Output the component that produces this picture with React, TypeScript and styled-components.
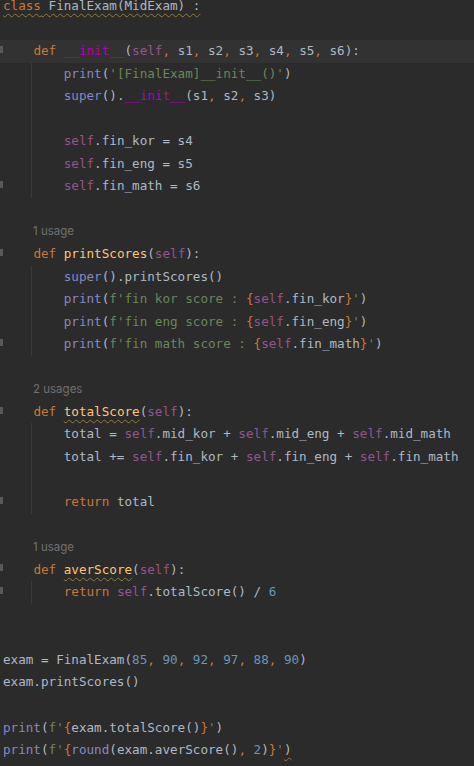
import React from "react";
import styled, { createGlobalStyle, css } from "styled-components";

const Global = createGlobalStyle`
  html, body { margin: 0; padding: 0; background: #2b2b2b; }
  body { width: 474px; height: 766px; overflow: hidden; }
`;

type Kind = "t" | "k" | "s" | "str" | "n" | "b" | "fn" | "m";
type Tok = [Kind, string, boolean?];

interface LineDef {
  toks?: Tok[];
  hint?: string;
  mark?: boolean;
  guide?: boolean;
  current?: boolean;
  underline?: boolean;
}

const colors: Record<Kind, string> = {
  t: "#aeb9c6",
  k: "#cc7832",
  s: "#94558d",
  str: "#6a8759",
  n: "#6897bb",
  b: "#8888c6",
  fn: "#ffc66d",
  m: "#b200b2",
};

const Editor = styled.div`
  width: 474px;
  height: 766px;
  overflow: hidden;
  background: #2b2b2b;
`;

const Lines = styled.div`
  display: flex;
  flex-direction: column;
  margin-top: -5px;
`;

const Row = styled.div<{ $current?: boolean; $guide?: boolean }>`
  display: flex;
  align-items: center;
  height: 22.55px;
  background-color: ${(p) => (p.$current ? "#323232" : "transparent")};
  ${(p) =>
    p.$guide &&
    css`
      background-image: linear-gradient(#3a3a3a, #3a3a3a);
      background-size: 1px 100%;
      background-position: 31px 0;
      background-repeat: no-repeat;
    `}
`;

const Gutter = styled.div`
  width: 3px;
  height: 100%;
  display: flex;
  align-items: center;
  flex-shrink: 0;
`;

const FoldMark = styled.span`
  display: block;
  width: 3px;
  height: 7px;
  background: #595959;
  margin-top: -4px;
`;

const Code = styled.pre<{ $underline?: boolean }>`
  margin: 0;
  font-family: "DejaVu Sans Mono", "Liberation Mono", monospace;
  font-size: 12.62px;
  line-height: 22.55px;
  white-space: pre;
  color: #aeb9c6;
  ${(p) =>
    p.$underline &&
    css`
      text-decoration: underline wavy #8f7d3f;
      text-decoration-thickness: 1px;
      text-underline-offset: 3px;
    `}
`;

const Tk = styled.span<{ $kind: Kind; $wavy?: boolean }>`
  color: ${(p) => colors[p.$kind]};
  ${(p) =>
    p.$wavy &&
    css`
      text-decoration: underline wavy #8f7d3f;
      text-decoration-thickness: 1px;
      text-underline-offset: 3px;
    `}
`;

const Hint = styled.span`
  padding-left: 30px;
  font-family: "Inter", "Noto Sans", sans-serif;
  font-size: 11.5px;
  color: #717171;
  line-height: 22.55px;
`;

const I1 = "    ";
const I2 = "        ";
const c: Tok = ["k", ","];

const lines: LineDef[] = [
  { toks: [["k", "class"], ["t", " FinalExam(MidExam) :"]], underline: true },
  {},
  {
    current: true,
    mark: true,
    toks: [
      ["t", I1], ["k", "def"], ["t", " "], ["m", "__init__"], ["t", "("], ["s", "self"], c,
      ["t", " s1"], c, ["t", " s2"], c, ["t", " s3"], c, ["t", " s4"], c, ["t", " s5"], c, ["t", " s6):"],
    ],
  },
  { guide: true, toks: [["t", I2], ["b", "print"], ["t", "("], ["str", "'[FinalExam]__init__()'"], ["t", ")"]] },
  {
    guide: true,
    toks: [["t", I2], ["b", "super"], ["t", "()."], ["m", "__init__"], ["t", "(s1"], c, ["t", " s2"], c, ["t", " s3)"]],
  },
  { guide: true },
  { guide: true, toks: [["t", I2], ["s", "self"], ["t", ".fin_kor = s4"]] },
  { guide: true, toks: [["t", I2], ["s", "self"], ["t", ".fin_eng = s5"]] },
  { guide: true, mark: true, toks: [["t", I2], ["s", "self"], ["t", ".fin_math = s6"]] },
  {},
  { hint: "1 usage" },
  { mark: true, toks: [["t", I1], ["k", "def"], ["t", " "], ["fn", "printScores"], ["t", "("], ["s", "self"], ["t", "):"]] },
  { guide: true, toks: [["t", I2], ["b", "super"], ["t", "().printScores()"]] },
  {
    guide: true,
    toks: [["t", I2], ["b", "print"], ["t", "("], ["str", "f'fin kor score : "], ["k", "{"], ["s", "self"], ["t", ".fin_kor"], ["k", "}"], ["str", "'"], ["t", ")"]],
  },
  {
    guide: true,
    toks: [["t", I2], ["b", "print"], ["t", "("], ["str", "f'fin eng score : "], ["k", "{"], ["s", "self"], ["t", ".fin_eng"], ["k", "}"], ["str", "'"], ["t", ")"]],
  },
  {
    guide: true,
    mark: true,
    toks: [["t", I2], ["b", "print"], ["t", "("], ["str", "f'fin math score : "], ["k", "{"], ["s", "self"], ["t", ".fin_math"], ["k", "}"], ["str", "'"], ["t", ")"]],
  },
  {},
  { hint: "2 usages" },
  { mark: true, toks: [["t", I1], ["k", "def"], ["t", " "], ["fn", "totalScore", true], ["t", "("], ["s", "self"], ["t", "):"]] },
  {
    guide: true,
    toks: [["t", I2 + "total = "], ["s", "self"], ["t", ".mid_kor + "], ["s", "self"], ["t", ".mid_eng + "], ["s", "self"], ["t", ".mid_math"]],
  },
  {
    guide: true,
    toks: [["t", I2 + "total += "], ["s", "self"], ["t", ".fin_kor + "], ["s", "self"], ["t", ".fin_eng + "], ["s", "self"], ["t", ".fin_math"]],
  },
  { guide: true },
  { guide: true, mark: true, toks: [["t", I2], ["k", "return"], ["t", " total"]] },
  {},
  { hint: "1 usage" },
  { mark: true, toks: [["t", I1], ["k", "def"], ["t", " "], ["fn", "averScore", true], ["t", "("], ["s", "self"], ["t", "):"]] },
  { guide: true, mark: true, toks: [["t", I2], ["k", "return"], ["t", " "], ["s", "self"], ["t", ".totalScore() / "], ["n", "6"]] },
  {},
  {},
  {
    toks: [["t", "exam = FinalExam("], ["n", "85"], c, ["t", " "], ["n", "90"], c, ["t", " "], ["n", "92"], c, ["t", " "], ["n", "97"], c, ["t", " "], ["n", "88"], c, ["t", " "], ["n", "90"], ["t", ")"]],
  },
  { toks: [["t", "exam.printScores()"]] },
  {},
  { toks: [["b", "print"], ["t", "("], ["str", "f'"], ["k", "{"], ["t", "exam.totalScore()"], ["k", "}"], ["str", "'"], ["t", ")"]] },
  {
    toks: [["b", "print"], ["t", "("], ["str", "f'"], ["k", "{"], ["b", "round"], ["t", "(exam.averScore()"], c, ["t", " "], ["n", "2"], ["t", ")"], ["k", "}"], ["str", "'"], ["t", ")", true]],
  },
];

export default function App() {
  return (
    <>
      <Global />
      <Editor>
        <Lines>
          {lines.map((l, i) => (
            <Row key={i} $current={l.current} $guide={l.guide}>
              <Gutter>{l.mark && <FoldMark />}</Gutter>
              {l.hint ? (
                <Hint>{l.hint}</Hint>
              ) : (
                <Code $underline={l.underline}>
                  {(l.toks ?? []).map((t, j) => (
                    <Tk key={j} $kind={t[0]} $wavy={t[2]}>
                      {t[1]}
                    </Tk>
                  ))}
                </Code>
              )}
            </Row>
          ))}
        </Lines>
      </Editor>
    </>
  );
}
